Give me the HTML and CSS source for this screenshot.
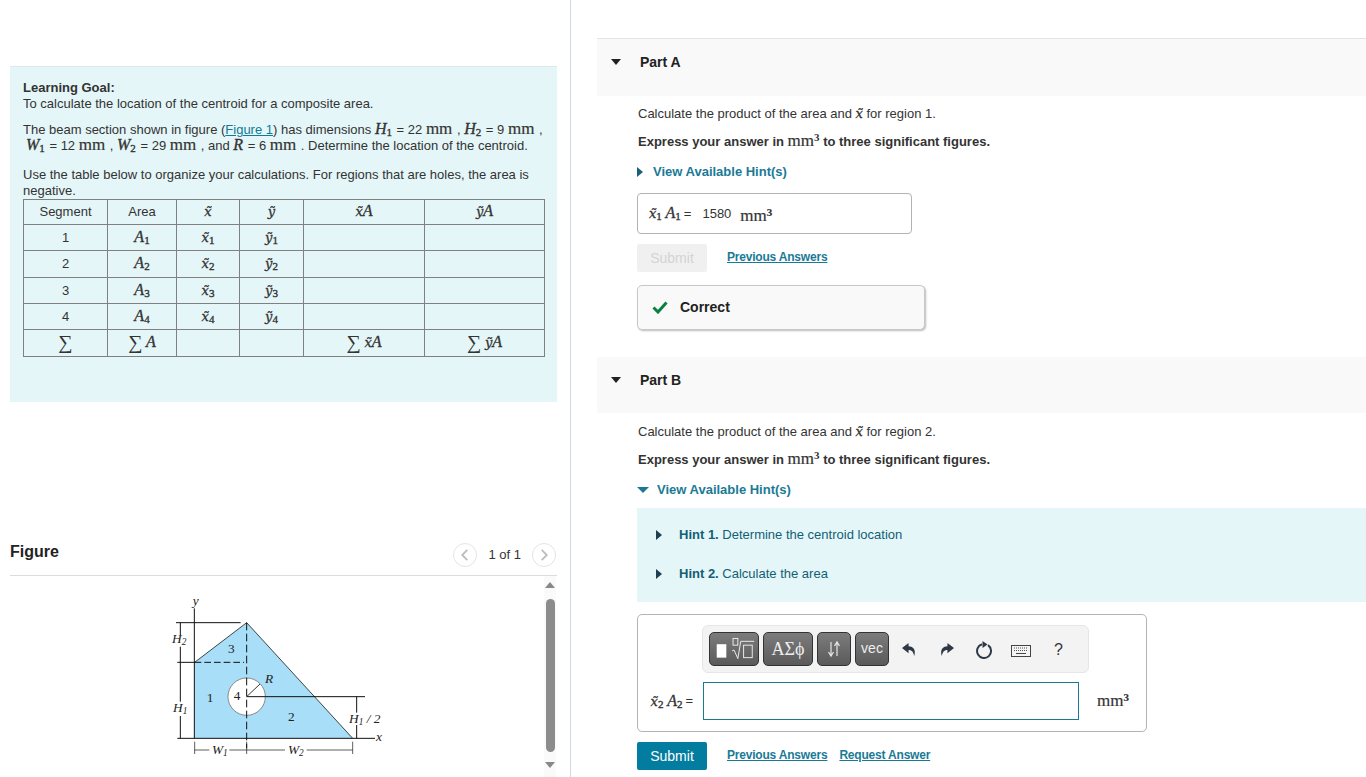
FILE: index.html
```html
<!DOCTYPE html>
<html lang="en">
<head>
<meta charset="utf-8">
<title>Centroid of a composite area</title>
<link rel="stylesheet" href="styles.css">
</head>
<body>
<div class="page">
  <section class="left">
    <div class="goal">
      <p class="goal-head"><b>Learning Goal:</b><br>To calculate the location of the centroid for a composite area.</p>
      <p class="goal-text">The beam section shown in figure (<a class="fig-link" href="#">Figure 1</a>) has dimensions <i class="m">H<sub>1</sub></i> = 22 <span class="u">mm</span> , <i class="m">H<sub>2</sub></i> = 9 <span class="u">mm</span> ,<br><i class="m w1">W<sub>1</sub></i> = 12 <span class="u">mm</span> , <i class="m">W<sub>2</sub></i> = 29 <span class="u">mm</span> , and <i class="m">R</i> = 6 <span class="u">mm</span> . Determine the location of the centroid.</p>
      <p class="goal-use">Use the table below to organize your calculations. For regions that are holes, the area is negative.</p>
      <table class="calc">
        <colgroup><col class="c1"><col class="c2"><col class="c3"><col class="c4"><col class="c5"><col class="c6"></colgroup>
        <tr class="r-head"><td>Segment</td><td>Area</td><td><i class="m"><span class="tx">x̃</span></i></td><td><i class="m"><span class="tx">ỹ</span></i></td><td><i class="m"><span class="tx">x̃</span>A</i></td><td><i class="m"><span class="tx">ỹ</span>A</i></td></tr>
        <tr><td>1</td><td><i class="m">A<sub>1</sub></i></td><td><i class="m"><span class="tx">x̃</span><sub>1</sub></i></td><td><i class="m"><span class="tx">ỹ</span><sub>1</sub></i></td><td></td><td></td></tr>
        <tr class="r-tall"><td>2</td><td><i class="m">A<sub>2</sub></i></td><td><i class="m"><span class="tx">x̃</span><sub>2</sub></i></td><td><i class="m"><span class="tx">ỹ</span><sub>2</sub></i></td><td></td><td></td></tr>
        <tr><td>3</td><td><i class="m">A<sub>3</sub></i></td><td><i class="m"><span class="tx">x̃</span><sub>3</sub></i></td><td><i class="m"><span class="tx">ỹ</span><sub>3</sub></i></td><td></td><td></td></tr>
        <tr><td>4</td><td><i class="m">A<sub>4</sub></i></td><td><i class="m"><span class="tx">x̃</span><sub>4</sub></i></td><td><i class="m"><span class="tx">ỹ</span><sub>4</sub></i></td><td></td><td></td></tr>
        <tr class="r-tall"><td><span class="sum">∑</span></td><td><span class="sum">∑</span> <i class="m">A</i></td><td></td><td></td><td><span class="sum">∑</span> <i class="m"><span class="tx">x̃</span>A</i></td><td><span class="sum">∑</span> <i class="m"><span class="tx">ỹ</span>A</i></td></tr>
      </table>
    </div>
    <div class="fig-head">
      <h2 class="fig-title">Figure</h2>
      <div class="pager">
        <span class="circle"><svg viewBox="0 0 24 24" width="24" height="24"><path d="M14.500 6.500 9 12l5.500 5.500" class="chev"/></svg></span>
        <span class="pager-text">1 of 1</span>
        <span class="circle"><svg viewBox="0 0 24 24" width="24" height="24"><path d="M9.500 6.500 15 12l-5.500 5.500" class="chev"/></svg></span>
      </div>
    </div>
    <div class="fig-body">
      <div class="fig-canvas">
        <svg class="beam" viewBox="0 0 750 561" width="250" height="187">
          <path d="M134 217 290 98 608 445H134Z" fill="#a8def7"/>
          <path d="M290 98 608 445M134 217 290 98" fill="none" stroke="#222" stroke-width="2.500"/>
          <circle cx="290" cy="320" r="56" fill="#fff" stroke="#777" stroke-width="2.500"/>
          <g fill="none" stroke="#111" stroke-width="3">
            <path d="M133 55V445M82 445H675M78 98H272M82 217H134"/>
            <path d="M134 217H282" stroke-dasharray="20 9"/>
            <path d="M290 98V475" stroke-dasharray="23 10"/>
            <path d="M290 320H645"/>
            <path d="M290 320 330 282" stroke-width="2.500"/>
            <path d="M91 98V135M91 170V217M91 217V335M91 378V445M620 320V368M620 405V445"/>
            <path d="M134 455V492M290 455V492M608 455V492" stroke-width="2"/>
            <path d="M134 480H178M238 480H405M470 480H608" stroke-width="2"/>
          </g>
          <g class="ftext">
            <text x="128" y="45" class="fi">y</text>
            <text x="66" y="160" class="fi">H<tspan class="fs" dy="6">2</tspan></text>
            <text x="69" y="366" class="fi">H<tspan class="fs" dy="6">1</tspan></text>
            <text x="234" y="190">3</text>
            <text x="170" y="336">1</text>
            <text x="251" y="331">4</text>
            <text x="414" y="394">2</text>
            <text x="345" y="280" class="fi">R</text>
            <text x="597" y="398" class="fi">H<tspan class="fs" dy="6">1</tspan><tspan dy="-6"> / 2</tspan></text>
            <text x="678" y="454" class="fi">x</text>
            <text x="186" y="492" class="fi">W<tspan class="fs" dy="6">1</tspan></text>
            <text x="414" y="492" class="fi">W<tspan class="fs" dy="6">2</tspan></text>
          </g>
        </svg>
      </div>
      <div class="scroll">
        <span class="arrow-up"></span>
        <span class="thumb"></span>
        <span class="arrow-down"></span>
      </div>
    </div>
  </section>

  <section class="right">
    <div class="part part-a">
      <span class="tri-down"></span><h3 class="part-title">Part A</h3>
    </div>
    <div class="part-body">
      <p class="q q-a">Calculate the product of the area and <i class="m"><span class="tx">x̃</span></i> for region 1.</p>
      <p class="q q-b"><b>Express your answer in <span class="u">mm</span><sup>3</sup> to three significant figures.</b></p>
      <p class="hints"><span class="tri-right"></span><a href="#">View Available Hint(s)</a></p>
      <div class="answer">
        <i class="m"><span class="tx">x̃</span><sub>1</sub> A<sub>1</sub></i><span class="eq">=</span><span class="val">1580</span><span class="u unit">mm<sup>3</sup></span>
      </div>
      <div class="actions">
        <span class="btn btn-off">Submit</span>
        <a class="act-link" href="#">Previous Answers</a>
      </div>
      <div class="correct">
        <svg class="check" viewBox="0 0 16 14" width="16" height="14"><path d="M1.500 7.500 6 12 14.500 2.500" fill="none" stroke="#0a8040" stroke-width="3"/></svg>
        <b>Correct</b>
      </div>
    </div>

    <div class="part part-b">
      <span class="tri-down"></span><h3 class="part-title">Part B</h3>
    </div>
    <div class="part-body part-body-b">
      <p class="q q-a">Calculate the product of the area and <i class="m"><span class="tx">x̃</span></i> for region 2.</p>
      <p class="q q-b"><b>Express your answer in <span class="u">mm</span><sup>3</sup> to three significant figures.</b></p>
      <p class="hints hints-open"><span class="tri-teal"></span><a href="#">View Available Hint(s)</a></p>
      <div class="hint-panel">
        <p class="hint"><span class="tri-small"></span><b>Hint 1.</b> Determine the centroid location</p>
        <p class="hint"><span class="tri-small"></span><b>Hint 2.</b> Calculate the area</p>
      </div>
      <div class="editor">
        <div class="toolbar">
          <span class="tb tb-tpl">
            <svg viewBox="0 0 50 34" width="49" height="34">
              <rect x="7" y="12" width="10" height="14" fill="#fff"/>
              <path d="M23 19l2-1 4 9 3-18h14" fill="none" stroke="#eee" stroke-width="1"/>
              <rect x="24" y="6" width="5" height="7" fill="none" stroke="#eee"/>
              <rect x="35" y="13" width="9" height="13" fill="none" stroke="#eee"/>
            </svg>
          </span>
          <span class="tb tb-greek">ΑΣϕ</span>
          <span class="tb tb-arrows"><svg viewBox="0 0 16 18" width="16" height="18"><path d="M5 2v13M2.500 12 5 16l2.500-4M11 16V3M8.500 6 11 2l2.500 4" fill="none" stroke="#e6e6e6" stroke-width="1.200"/></svg></span>
          <span class="tb tb-vec">vec</span>
          <span class="ti"><svg viewBox="0 0 16 16" width="15" height="15"><path d="M7 1 0 6.500 7 12V8.500c3 0 5 1.500 6 6.500 2-6-.5-10.500-6-10.500Z" fill="#2d3a45"/></svg></span>
          <span class="ti"><svg viewBox="0 0 16 16" width="15" height="15"><path d="M9 1l7 5.500L9 12V8.500c-3 0-5 1.500-6 6.500-2-6 .5-10.500 6-10.500Z" fill="#2d3a45"/></svg></span>
          <span class="ti"><svg viewBox="0 0 18 18" width="18" height="18"><path d="M7 3.300A7 7 0 1 0 13 4.200" fill="none" stroke="#2d3a45" stroke-width="2"/><path d="M7.500 0v7l5-3.500Z" fill="#2d3a45"/></svg></span>
          <span class="ti ti-kb"><svg viewBox="0 0 20 12" width="20" height="12"><rect x=".5" y=".5" width="19" height="11" fill="#f4f4f4" stroke="#444"/><path d="M3 3h14M3 5.500h14" stroke="#555" stroke-dasharray="1 1"/><path d="M5 8.500h10" stroke="#444"/></svg></span>
          <span class="ti ti-help">?</span>
        </div>
        <div class="entry">
          <span class="entry-label"><i class="m"><span class="tx">x̃</span><sub>2</sub> A<sub>2</sub></i><span class="eq">=</span></span>
          <span class="field"></span>
          <span class="u entry-unit">mm<sup>3</sup></span>
        </div>
      </div>
      <div class="actions actions-b">
        <span class="btn btn-on">Submit</span>
        <a class="act-link" href="#">Previous Answers</a>
        <a class="act-link link-2" href="#">Request Answer</a>
      </div>
    </div>
  </section>
</div>
</body>
</html>
```
FILE: styles.css
```css
* { box-sizing: border-box; }
html, body { margin: 0; height: 777px; overflow: hidden; background: #fff; }
body { font: 13px/16px "Liberation Sans", Arial, sans-serif; color: #333; }
p, h2, h3 { margin: 0; }
a { color: #0f7a97; }
.page { display: flex; height: 777px; }

.left { width: 571px; flex: none; padding: 66px 13px 0 10px; border-right: 1px solid #cfdae0; display: flex; flex-direction: column; }
.goal { height: 336px; background: #e5f6f8; border-top: 1px solid #dde8ea; padding: 13px 13px 0; }
.goal-text { margin-top: 10px; }
.goal-text .m, .goal-text .u { margin-right: 1px; }
.goal-use { margin-top: 13px; }
.m { font-family: "Liberation Serif", serif; font-style: italic; font-size: 16px; line-height: 0; color: #333; -webkit-text-stroke: 0.35px #333; }
.m sub { font-size: 11px; font-style: normal; line-height: 0; vertical-align: -2px; }
.tx { font-family: "DejaVu Serif", serif; font-size: 13px; -webkit-text-stroke: 0.3px #333; }
.w1 { margin-left: 3px; }
.u { font-family: "Liberation Serif", serif; font-size: 17px; line-height: 0; font-weight: 400; -webkit-text-stroke: 0.2px #333; }
sup { font-size: 11px; line-height: 0; font-family: "Liberation Serif", serif; font-weight: 700; vertical-align: 5px; }
.fig-link { color: #0f7a97; }

.calc { border-collapse: collapse; table-layout: fixed; width: 521px; margin-top: 0; text-align: center; }
.calc td { border: 1px solid #808080; height: 26px; padding: 0; }
.r-head td { height: 25px; }
.r-tall td { height: 27px; }
.c1 { width: 84px; } .c2 { width: 69px; } .c3 { width: 63px; } .c4 { width: 64px; } .c5 { width: 121px; } .c6 { width: 120px; }
.sum { font-family: "Liberation Serif", serif; font-size: 20px; line-height: 0; vertical-align: -2px; }

.fig-head { display: flex; align-items: center; justify-content: space-between; height: 39px; margin-top: 135px; padding: 0 1px 3px 0; border-bottom: 1px solid #dcdcdc; }
.fig-title { font-size: 16px; font-weight: 700; color: #222; margin-top: -5px; }
.pager { display: flex; align-items: center; gap: 11px; }
.circle { width: 24px; height: 24px; border: 1px solid #e4e4e4; border-radius: 50%; display: flex; align-items: center; justify-content: center; }
.chev { fill: none; stroke: #bdbdbd; stroke-width: 2; }
.pager-text { color: #333; }

.fig-body { flex: 1; display: flex; }
.fig-canvas { flex: 1; padding: 14px 0 0 140px; overflow: hidden; }
.beam { display: block; }
.ftext text { font-family: "Liberation Serif", serif; font-size: 40px; fill: #222; }
.ftext .fi { font-style: italic; }
.ftext .fs { font-size: 28px; }
.scroll { width: 12px; margin-right: 1px; background: #fafafa; display: flex; flex-direction: column; align-items: center; padding-top: 6px; }
.arrow-up { border: 5px solid transparent; border-top: 0; border-bottom: 6px solid #888; }
.arrow-down { border: 5px solid transparent; border-bottom: 0; border-top: 6px solid #888; margin-top: 10px; }
.thumb { width: 9px; height: 153px; background: #8c8c8c; border-radius: 5px; margin-top: 11px; }

.right { flex: 1; padding: 38px 0 0 26px; min-width: 0; }
.part { height: 58px; background: #f9f9f9; padding: 14px 0 0 14px; display: flex; align-items: flex-start; }
.part-a { border-top: 1px solid #e4e4e4; }
.part-b { height: 56px; padding-top: 14px; }
.part-title { font-size: 14px; font-weight: 700; color: #222; margin-left: 19px; line-height: 18px; }
.tri-down { width: 0; height: 0; border: 5.5px solid transparent; border-bottom: 0; border-top: 6px solid #222; margin-top: 6px; }
.part-body { padding-left: 40px; }
.part-body-b .q-a { margin-top: 11px; }
.q { line-height: 16px; padding-left: 1px; }
.q-a { margin-top: 10px; }
.q-b { margin-top: 12px; }
.hints { margin-top: 14px; font-weight: 700; display: flex; align-items: center; }
.hints a { text-decoration: none; color: #1a7a96; }
.tri-right { width: 0; height: 0; border: 5px solid transparent; border-right: 0; border-left: 6px solid #1d5f78; margin-right: 10px; }
.tri-teal { width: 0; height: 0; border: 6px solid transparent; border-bottom: 0; border-top: 6px solid #1a7a96; margin-right: 8px; }
.answer { width: 275px; height: 41px; margin-top: 13px; border: 1px solid #b3b3b3; border-radius: 4px; padding: 0 11px; display: flex; align-items: center; }
.eq { margin: 0 11px 0 3px; }
.val { margin-right: 9px; }
.answer .m, .entry-label .m { white-space: nowrap; line-height: 16px; }
.actions { display: flex; align-items: center; margin-top: 10px; height: 28px; }
.btn { width: 70px; height: 28px; border-radius: 2px; display: flex; align-items: center; justify-content: center; font-size: 14px; }
.btn-off { background: #f0f0f0; color: #d4d4d4; }
.btn-on { background: #037d9f; color: #fff; }
.act-link { margin-left: 20px; font-weight: 700; font-size: 12px; letter-spacing: -0.2px; color: #1a7a96; margin-top: -2px; }
.link-2 { margin-left: 12px; }
.correct { width: 288px; height: 45px; margin-top: 13px; margin-bottom: 27px; padding: 0 0 2px 14px; background: #f9f9f9; border: 1px solid #c8c8c8; border-radius: 5px; box-shadow: 1px 1px 2px #bbb; display: flex; align-items: center; gap: 12px; color: #222; font-size: 14px; }
.check { flex: none; }
.hints-open { margin-top: 14px; }
.hint-panel { height: 94px; margin-top: 10px; background: #e5f6f8; padding: 19px 0 0 19px; color: #125f75; }
.hint { display: flex; align-items: center; height: 16px; margin-bottom: 23px; white-space: pre; }
.tri-small { width: 0; height: 0; border: 5px solid transparent; border-right: 0; border-left: 6px solid #1d3f50; margin-right: 17px; }
.editor { width: 510px; height: 118px; margin-top: 12px; border: 1px solid #b3b3b3; border-radius: 5px; padding: 10px 0 0 64px; }
.toolbar { width: 387px; height: 48px; background: #f3f3f3; border: 1px solid #e6e6e6; border-radius: 6px; display: flex; align-items: center; padding-left: 6px; gap: 4px; }
.tb { height: 34px; flex: none; background: linear-gradient(#7c7c7c, #5a5a5a); border: 1px solid #333; border-radius: 5px; color: #eee; display: flex; align-items: center; justify-content: center; }
.tb-tpl { width: 50px; }
.tb-greek { width: 50px; font-family: "Liberation Serif", serif; font-size: 18px; }
.tb-arrows { width: 34px; }
.tb-vec { width: 34px; font-size: 14px; padding-bottom: 3px; }
.ti { width: 33px; flex: none; display: flex; justify-content: center; align-items: center; color: #333; padding-top: 1px; }
.ti-kb { padding-top: 4px; }
.ti-help { font-size: 16px; margin-left: 1px; }
.entry { display: flex; align-items: center; margin-top: 9px; margin-left: -64px; }
.entry-label { width: 65px; flex: none; display: flex; justify-content: flex-end; padding-right: 10px; white-space: nowrap; }
.entry-label .eq { margin: 0 0 0 3px; }
.field { width: 376px; height: 38px; border: 1px solid #1a7a96; flex: none; }
.entry-unit { margin: 0 0 4px 18px; }
.actions-b { margin-top: 10px; }
```
